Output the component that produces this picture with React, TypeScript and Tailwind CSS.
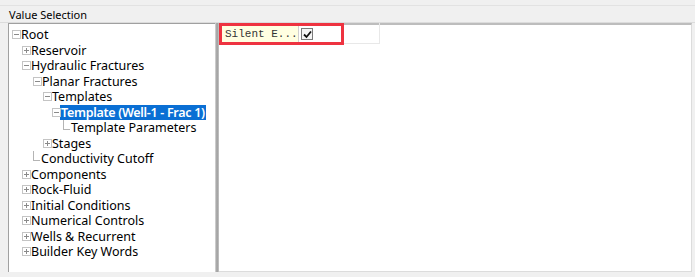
import React from 'react';

type Node = {
  label: string;
  level: number;
  kind: 'plus' | 'minus' | 'leaf';
  selected?: boolean;
};

const nodes: Node[] = [
  { label: 'Root', level: 0, kind: 'minus' },
  { label: 'Reservoir', level: 1, kind: 'plus' },
  { label: 'Hydraulic Fractures', level: 1, kind: 'minus' },
  { label: 'Planar Fractures', level: 2, kind: 'minus' },
  { label: 'Templates', level: 3, kind: 'minus' },
  { label: 'Template (Well-1 - Frac 1)', level: 4, kind: 'minus', selected: true },
  { label: 'Template Parameters', level: 5, kind: 'leaf' },
  { label: 'Stages', level: 3, kind: 'plus' },
  { label: 'Conductivity Cutoff', level: 2, kind: 'leaf' },
  { label: 'Components', level: 1, kind: 'plus' },
  { label: 'Rock-Fluid', level: 1, kind: 'plus' },
  { label: 'Initial Conditions', level: 1, kind: 'plus' },
  { label: 'Numerical Controls', level: 1, kind: 'plus' },
  { label: 'Wells & Recurrent', level: 1, kind: 'plus' },
  { label: 'Builder Key Words', level: 1, kind: 'plus' },
];

const indents = ['pl-[3px]', 'pl-[13px]', 'pl-[24px]', 'pl-[34px]', 'pl-[43px]', 'pl-[54px]'];

function Expander({ kind }: { kind: Node['kind'] }) {
  if (kind === 'leaf') {
    return (
      <span className="relative w-[7px] h-[15px] shrink-0">
        <span className="absolute left-0 top-0 h-[9px] border-l border-[#b4b4b4]" />
        <span className="absolute left-0 top-[9px] w-[7px] border-t border-[#b4b4b4]" />
      </span>
    );
  }
  return (
    <span className="relative w-[9px] h-[9px] mr-[-1px] shrink-0 border border-[#c4c4c4] bg-white">
      <span className="absolute left-[1px] right-[1px] top-[3px] border-t border-[#8a8a8a]" />
      {kind === 'plus' && <span className="absolute top-[1px] bottom-[1px] left-[3px] border-l border-[#8a8a8a]" />}
    </span>
  );
}

export default function App() {
  return (
    <div className="w-[695px] h-[277px] bg-[#f0f0f0] flex flex-col font-['Noto_Sans',sans-serif] text-[12.5px] text-black overflow-hidden">
      <div className="h-[6px] border-b border-[#e2e2e2]" />
      <div className="h-[16px] pl-[9px] pt-[1px] leading-[16px] text-[11px]">Value Selection</div>
      <div className="flex-1 flex pl-[8px] pr-[3px] pb-[5px] border-t border-[#dcdcdc]">
        <div className="w-[207px] bg-white border-l border-t border-[#a0a0a0] pt-[3px]">
          {nodes.map((n) => (
            <div key={n.label} className={`flex items-center h-[15.5px] ${indents[n.level]}`}>
              <Expander kind={n.kind} />
              <span
                className={
                  n.selected
                    ? 'bg-[#0a6fd4] text-white font-semibold tracking-[-0.3px] px-[1px] leading-[15px] whitespace-nowrap'
                    : 'px-[1px] leading-[15px] whitespace-nowrap'
                }
              >
                {n.label}
              </span>
            </div>
          ))}
        </div>
        <div className="w-[4px] bg-gradient-to-r from-[#dcdcdc] via-[#9a9a9a] to-[#c8c8c8]" />
        <div className="flex-1 bg-white border-r border-b border-[#dcdcdc] border-t-2 border-t-[#bdbdbd]">
          <div className="flex -mt-[2px]">
            <div className="flex border-[3px] border-[#ee3340]">
              <div className="w-[76px] h-[16px] bg-[#ffffe1] pl-[3px] font-['Liberation_Mono',monospace] text-[11px] leading-[16px] text-[#333]">
                Silent E...
              </div>
              <div className="w-[43px] h-[16px] border-l border-[#d0d0d0] flex items-center pl-[2px]">
                <span className="w-[12px] h-[12px] border border-[#7a7a7a] bg-[#f5f5f5] flex items-center justify-center">
                  <svg width="9" height="9" viewBox="0 0 9 9">
                    <path d="M1 4.5 L3.5 7 L8 1.5" stroke="#111" strokeWidth="1.8" fill="none" />
                  </svg>
                </span>
              </div>
            </div>
            <div className="w-[36px] h-[21px] border-b border-r border-[#e8e8e8]" />
          </div>
        </div>
      </div>
    </div>
  );
}
